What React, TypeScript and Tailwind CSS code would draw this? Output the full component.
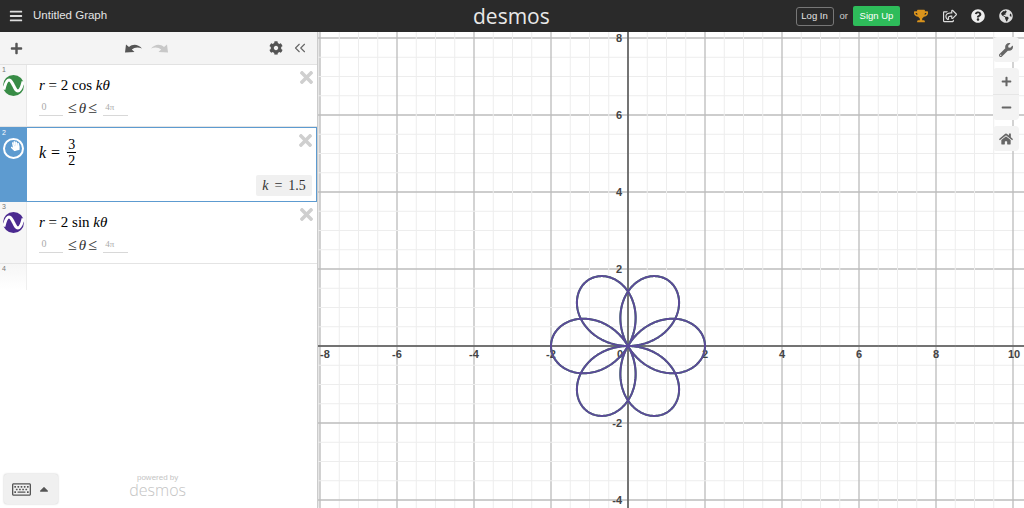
import React from "react";
import {
  FaBars, FaPlus, FaMinus, FaCog, FaTimes, FaTrophy, FaRegShareSquare,
  FaQuestionCircle, FaGlobeAmericas, FaWrench, FaHome, FaRegKeyboard, FaCaretUp, FaHandPaper,
} from "react-icons/fa";
import { ChevronsLeft } from "lucide-react";

const OX = 310; // origin inside the graph area
const OY = 314;
const U = 38.5;

function rose(fn: (t: number) => number) {
  const pts: string[] = [];
  for (let i = 0; i <= 1000; i++) {
    const t = (i / 1000) * 4 * Math.PI;
    const r = fn(t);
    pts.push(`${(OX + U * r * Math.cos(t)).toFixed(2)},${(OY - U * r * Math.sin(t)).toFixed(2)}`);
  }
  return pts.join(" ");
}

function Graph() {
  const lines: React.ReactNode[] = [];
  for (let i = -18; i <= 42; i++) {
    const x = OX + (i * U) / 2;
    const y = OY + (i * U) / 2;
    const major = i % 4 === 0;
    const stroke = major ? "#bcbcbc" : "#ededed";
    const w = major ? 1.3 : 1;
    lines.push(<line key={`v${i}`} x1={x} x2={x} y1={0} y2={476} stroke={stroke} strokeWidth={w} />);
    lines.push(<line key={`h${i}`} x1={0} x2={706} y1={y} y2={y} stroke={stroke} strokeWidth={w} />);
  }
  const xs = [-8, -6, -4, -2, 2, 4, 6, 8, 10];
  const ys = [8, 6, 4, 2, -2, -4];
  const label = "fill-[#444] text-[11px] font-bold";
  return (
    <svg className="absolute inset-0 h-full w-full" viewBox="0 0 706 476">
      {lines}
      <line x1={OX} x2={OX} y1={0} y2={476} stroke="#555" strokeWidth={1.5} />
      <line x1={0} x2={706} y1={OY} y2={OY} stroke="#555" strokeWidth={1.5} />
      {xs.map((v) => (
        <text key={v} x={v === -8 ? 7 : v === 10 ? 696 : OX + v * U} y={OY + 12} textAnchor="middle" className={label}>
          {v}
        </text>
      ))}
      {ys.map((v) => (
        <text key={v} x={OX - 6} y={OY - v * U + 4} textAnchor="end" className={label}>
          {v}
        </text>
      ))}
      <text x={OX - 5} y={OY + 12} textAnchor="end" className={label}>0</text>
      <polyline points={rose((t) => 2 * Math.cos(1.5 * t))} fill="none" stroke="#388c46" strokeWidth={2} />
      <polyline points={rose((t) => 2 * Math.sin(1.5 * t))} fill="none" stroke="#5b4a99" strokeWidth={2} />
    </svg>
  );
}

function Wave({ color }: { color: string }) {
  return (
    <svg width="21" height="21" viewBox="0 0 21 21" className="block">
      <circle cx="10.5" cy="10.5" r="10.5" fill={color} />
      <path d="M0.8 14.5 C2.5 8 3.8 5 6 5 C8.2 5 8.8 7.5 10.5 10.5 C12.2 13.5 12.8 16 15 16 C17.2 16 18.5 13 20.2 6.5" fill="none" stroke="#fff" strokeWidth="3" />
    </svg>
  );
}

function Arrow({ cls, flip }: { cls: string; flip?: boolean }) {
  return (
    <svg width="17" height="10" viewBox="0 0 17 10" className={`${cls} ${flip ? "-scale-x-100" : ""}`}>
      <path d="M0 9.5 L1 1.5 L4 4 C7.5 1 12.5 0.5 17 5.5 C13 3.8 9.5 4.2 6.8 6.5 L9.5 9 Z" fill="currentColor" />
    </svg>
  );
}

function Domain() {
  return (
    <div className="flex h-[16px] items-center font-['Liberation_Serif',serif] text-[#333]">
      <span className="w-[24px] border-b border-[#d8d8d8] pb-[1px] text-[10px] leading-[14px] text-[#aaa]">&nbsp;0</span>
      <span className="ml-[5px] w-[31px] whitespace-nowrap text-[16px] leading-[16px]">≤<i className="mx-[2px] text-[15px]">θ</i>≤</span>
      <span className="ml-[4px] w-[25px] border-b border-[#d8d8d8] pb-[1px] text-[9px] leading-[14px] text-[#aaa]">&nbsp;4π</span>
    </div>
  );
}

function Row({
  n, icon, active, h, children, extra,
}: {
  n: number; icon: React.ReactNode; active?: boolean; h: string; children: React.ReactNode; extra?: React.ReactNode;
}) {
  return (
    <div className={`relative flex ${h} ${active ? "border border-[#5d9bd0]" : "border-b border-[#e4e4e4]"} bg-white`}>
      <div className={`relative w-[27px] shrink-0 ${active ? "-ml-px bg-[#5d9bd0] text-white" : "border-r border-[#e8e8e8] bg-[#f6f6f6] text-[#777]"}`}>
        <span className="absolute left-[2px] top-0 font-['Liberation_Sans',sans-serif] text-[7px] leading-[10px]">{n}</span>
        <div className="absolute left-[3px] top-[10px]">{icon}</div>
      </div>
      <div className="flex flex-1 flex-col pl-[12px] pt-[10px]">{children}</div>
      <FaTimes className="absolute right-[1px] top-[3px] text-[19px] text-[#cfcfcf]" />
      {extra}
    </div>
  );
}

function Side({ children, cls }: { children: React.ReactNode; cls: string }) {
  return <div className={`flex w-[26px] items-center justify-center bg-[#f3f3f3] text-[#666] ${cls}`}>{children}</div>;
}

export default function App() {
  return (
    <div className="flex h-[508px] w-[1024px] flex-col overflow-hidden bg-white font-['Liberation_Sans',sans-serif]">
      <header className="flex h-[32px] shrink-0 items-center bg-[#2a2a2a] text-[#e4e4e4]">
        <FaBars className="ml-[9px] text-[14px] text-[#ddd]" />
        <span className="ml-[10px] w-[74px] whitespace-nowrap text-[11.5px]">Untitled Graph</span>
        <span className="ml-[366px] w-[80px] font-['Open_Sans',sans-serif] text-[21px] leading-[32px] text-[#e8e8e8]">desmos</span>
        <div className="ml-auto flex items-center">
          <span className="flex h-[19px] w-[38px] items-center justify-center rounded-[3px] border border-[#777] text-[9.5px]">Log In</span>
          <span className="ml-[6px] text-[9.5px] text-[#ccc]">or</span>
          <span className="ml-[5px] flex h-[20px] w-[47px] items-center justify-center rounded-[2px] bg-[#2ebc5a] text-[9.5px] text-white">Sign Up</span>
          <FaTrophy className="ml-[14px] text-[14px] text-[#d9931c]" />
          <FaRegShareSquare className="ml-[15px] text-[14px] text-[#ddd]" />
          <FaQuestionCircle className="ml-[14px] text-[14px] text-[#eee]" />
          <FaGlobeAmericas className="ml-[14px] mr-[11px] text-[14px] text-[#ddd]" />
        </div>
      </header>

      <main className="flex min-h-0 flex-1">
        <aside className="relative flex w-[318px] shrink-0 flex-col border-r border-[#ccc] bg-white shadow-[1px_0_2px_rgba(0,0,0,0.15)]">
          <div className="flex h-[33px] shrink-0 items-center border-b border-[#e2e2e2] bg-[#f4f4f4] text-[#555]">
            <FaPlus className="ml-[10px] text-[13px]" />
            <Arrow cls="ml-[102px] text-[#555]" />
            <Arrow cls="ml-[9px] text-[#c8c8c8]" flip />
            <FaCog className="ml-[101px] text-[14px]" />
            <ChevronsLeft className="ml-[8px] text-[#666]" size={18} strokeWidth={1.5} />
          </div>

          <Row n={1} h="h-[62px]" icon={<Wave color="#388c46" />}>
            <div className="font-['Liberation_Serif',serif] text-[15px] leading-[20px] text-black">
              <i>r</i> = 2 cos <i>kθ</i>
            </div>
            <div className="mt-[5px]"><Domain /></div>
          </Row>

          <Row
            n={2}
            h="h-[75px]"
            active
            icon={
              <div className="relative h-[21px] w-[21px] rounded-full border-2 border-white">
                <FaHandPaper className="absolute left-[5px] top-[1px] -rotate-12 text-[10px] text-white" />
              </div>
            }
            extra={
              <div className="absolute bottom-[5px] right-[4px] flex h-[21px] w-[56px] items-center justify-center gap-[6px] rounded-[2px] bg-[#f0f0f0] font-['Liberation_Serif',serif] text-[14px] text-[#333]">
                <i>k</i><span>=</span><span>1.5</span>
              </div>
            }
          >
            <div className="flex items-center font-['Liberation_Serif',serif] text-[16px] text-black">
              <i>k</i>
              <span className="ml-[5px]">=</span>
              <span className="ml-[7px] flex flex-col items-center text-[14px] leading-[13px]">
                <span className="border-b border-black px-[1px] pb-[1px]">3</span>
                <span className="pt-[1px]">2</span>
              </span>
            </div>
          </Row>

          <Row n={3} h="h-[62px]" icon={<Wave color="#4b2a90" />}>
            <div className="font-['Liberation_Serif',serif] text-[15px] leading-[20px] text-black">
              <i>r</i> = 2 sin <i>kθ</i>
            </div>
            <div className="mt-[5px]"><Domain /></div>
          </Row>

          <div className="relative h-[26px] w-[27px] border-r border-[#eee] bg-gradient-to-b from-[#f6f6f6] to-white text-[#777]">
            <span className="absolute left-[2px] top-0 text-[7px] leading-[10px]">4</span>
          </div>

          <div className="mt-auto flex items-end justify-between pb-[4px] pl-[4px] pr-[131px]">
            <div className="flex h-[30px] w-[54px] items-center justify-center gap-[6px] rounded-[3px] bg-[#f0f0f0] text-[#555] shadow-[0_0_2px_rgba(0,0,0,0.25)]">
              <FaRegKeyboard className="text-[19px]" />
              <FaCaretUp className="text-[14px]" />
            </div>
            <div className="mb-[7px] flex flex-col items-center text-[#c4c4c4]">
              <span className="text-[8px] leading-[10px]">powered by</span>
              <span className="font-['Open_Sans',sans-serif] text-[16px] font-light leading-[14px]">desmos</span>
            </div>
          </div>
        </aside>

        <section className="relative min-w-0 flex-1 overflow-hidden">
          <Graph />
          <div className="absolute right-[5px] top-[5px] flex flex-col">
            <Side cls="h-[25px] rounded-[4px]"><FaWrench className="text-[14px]" /></Side>
            <Side cls="mt-[6px] h-[26px] rounded-t-[4px]"><FaPlus className="text-[11px]" /></Side>
            <Side cls="h-[26px] rounded-b-[4px] border-t border-[#e6e6e6]"><FaMinus className="text-[11px]" /></Side>
            <Side cls="mt-[6px] h-[25px] rounded-[4px]"><FaHome className="text-[14px]" /></Side>
          </div>
        </section>
      </main>
    </div>
  );
}
